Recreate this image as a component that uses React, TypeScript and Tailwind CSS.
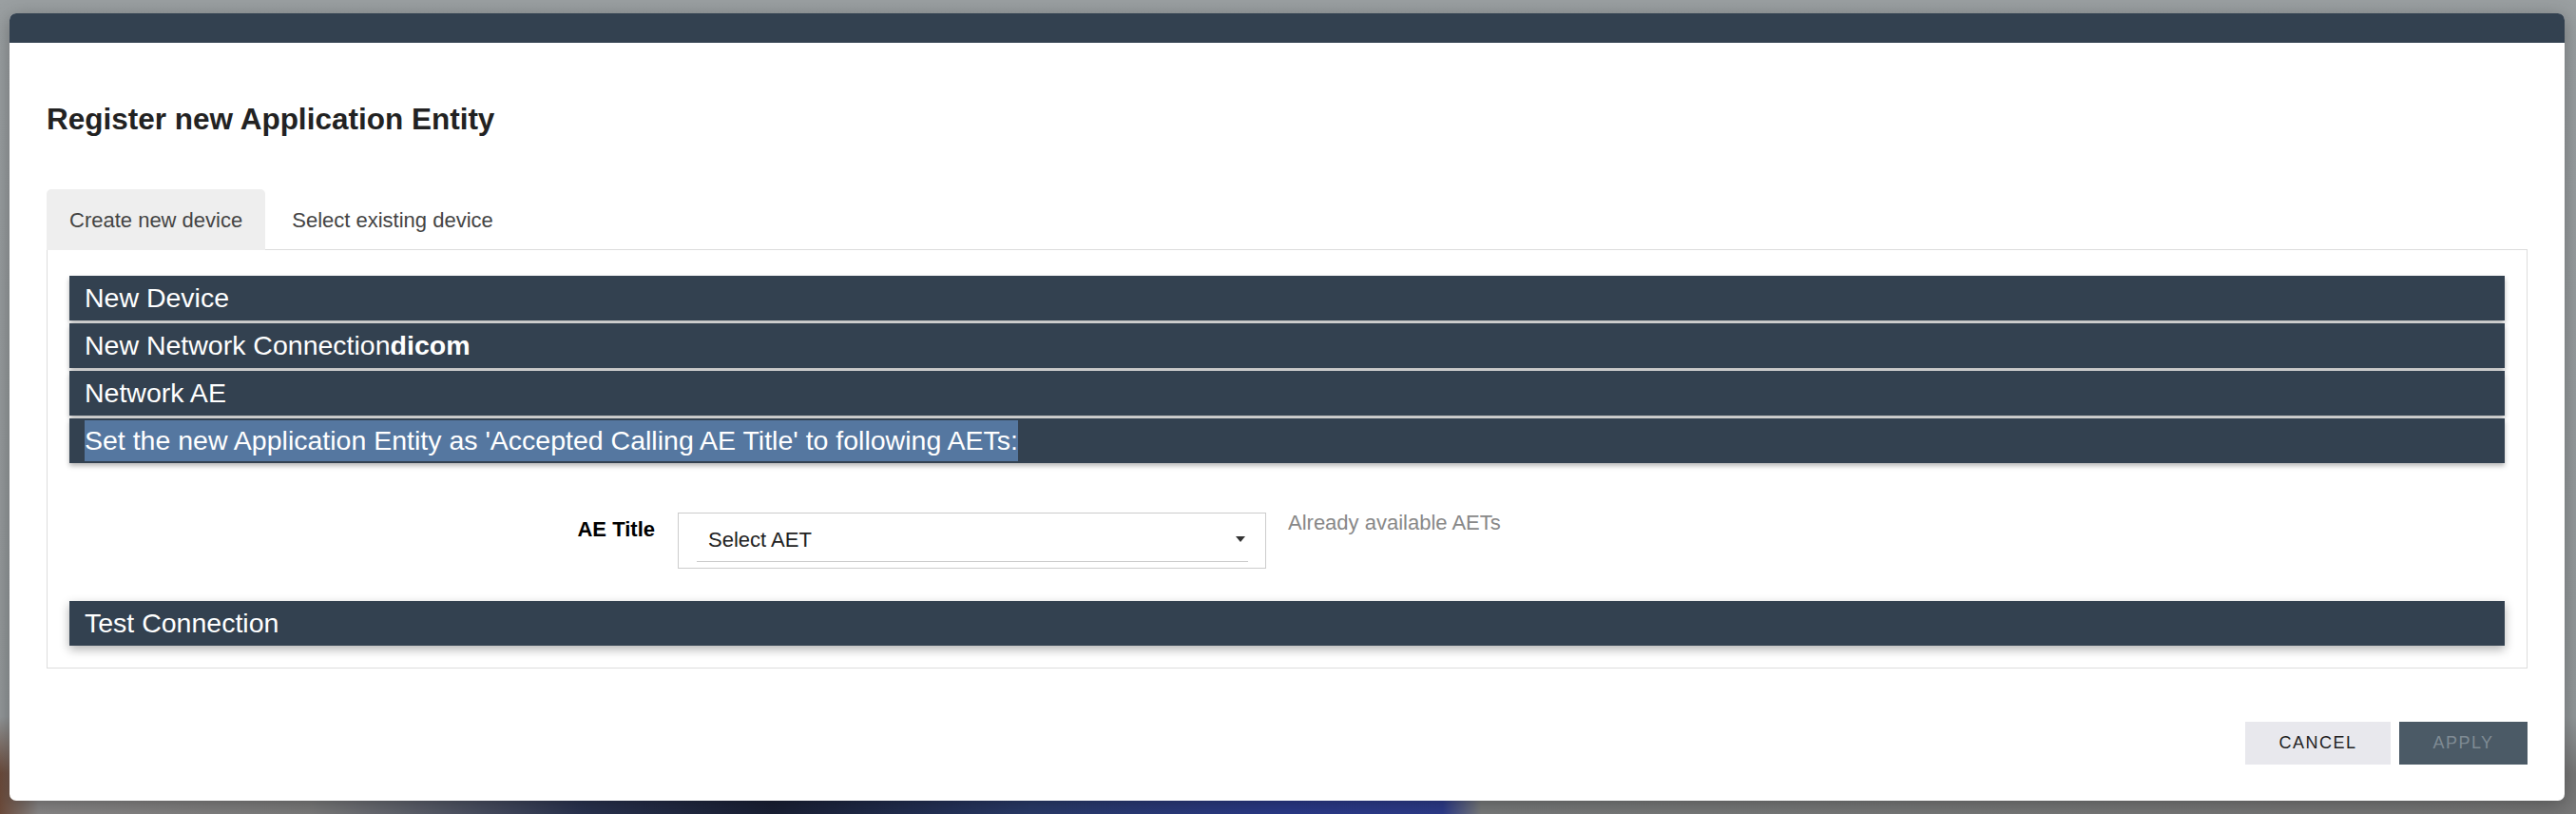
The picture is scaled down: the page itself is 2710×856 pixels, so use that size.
import React from "react";

const bars = ["New Device", "New Network Connection", "Network AE"];

function Bar({ children }: { children: React.ReactNode }) {
	return (
		<div className="h-[47px] flex items-center pl-[16px] bg-[#334150] text-white text-[28.5px] shadow-[0_3px_5px_rgba(0,0,0,0.28)]">
			{children}
		</div>
	);
}

export default function App() {
	return (
		<div
			className="w-[2710px] h-[856px] pt-[14px] pl-[10px] pr-[12px] overflow-hidden bg-[linear-gradient(to_bottom,#9a9fa1_0%,#93989a_88%,transparent_95%),linear-gradient(to_right,#6b4a3a_0%,#8a8888_1.5%,#7d7d7d_12%,#2a3350_22.6%,#1a2035_30%,#2a3b6a_40%,#2b3a8a_50%,#2e3c8c_56%,#7a7c7c_57.5%,#777777_100%)]"
			style={{ fontFamily: '"Liberation Sans", Arial, sans-serif' }}
		>
			<div className="h-[828px] flex flex-col bg-white rounded-[7px] overflow-hidden shadow-[0_4px_20px_rgba(0,0,0,0.3)]">
				<div className="h-[31px] bg-[#334150]" />

				<div className="flex-1 flex flex-col px-[39px]">
					<h2 className="pt-[62px] text-[31.5px] leading-[36px] font-bold text-[#222]">
						Register new Application Entity
					</h2>

					{/* tabs */}
					<div className="mt-[56px] flex relative z-10 -mb-px">
						<div className="h-[64px] flex items-center px-[24px] bg-[#eeeeee] rounded-t-[5px] text-[22px] text-[#444]">
							Create new device
						</div>
						<div className="h-[64px] flex items-center px-[28px] text-[22px] text-[#444]">
							Select existing device
						</div>
					</div>

					<div className="border border-[#dddddd] pt-[27px] px-[23px] pb-[23px]">
						<div className="flex flex-col gap-[3px]">
							{bars.map((b, i) => (
								<Bar key={b}>
									{b}
									{i === 1 && <b>dicom</b>}
								</Bar>
							))}
							<Bar>
								<span className="bg-[#5577a0]">
									Set the new Application Entity as 'Accepted Calling AE Title'
									to following AETs:
								</span>
							</Bar>
						</div>

						<div className="mt-[48px] flex items-start">
							<div className="w-[616px] mt-[10px] text-right text-[22px] leading-[24px] font-bold text-black">
								AE Title
							</div>
							<div className="ml-[24px] mt-[4px] w-[619px] h-[59px] border border-[#cccccc] pt-[4px] pl-[19px] pr-[18px]">
								<div className="h-[47px] flex items-center justify-between pl-[12px] pr-[3px] border-b border-[#cccccc]">
									<span className="text-[22px] text-[#222]">Select AET</span>
									<span className="w-0 h-0 border-l-[5px] border-r-[5px] border-t-[6px] border-l-transparent border-r-transparent border-t-[#333]" />
								</div>
							</div>
							<div className="ml-[23px] mt-[3px] text-[22px] leading-[24px] text-[#888]">
								Already available AETs
							</div>
						</div>

						<div className="mt-[34px] h-[47px] flex items-center pl-[16px] bg-[#334150] text-white text-[28.5px] shadow-[0_4px_10px_rgba(0,0,0,0.3)]">
							Test Connection
						</div>
					</div>

					<div className="mt-[56px] flex justify-end gap-[9px]">
						<button className="w-[153px] h-[45px] bg-[#e8e8ed] text-[18px] tracking-[1.5px] text-[#222]">
							CANCEL
						</button>
						<button className="w-[135px] h-[45px] bg-[#4b5a66] text-[18px] tracking-[1.5px] text-[#7f8b94]">
							APPLY
						</button>
					</div>
				</div>
			</div>
		</div>
	);
}
